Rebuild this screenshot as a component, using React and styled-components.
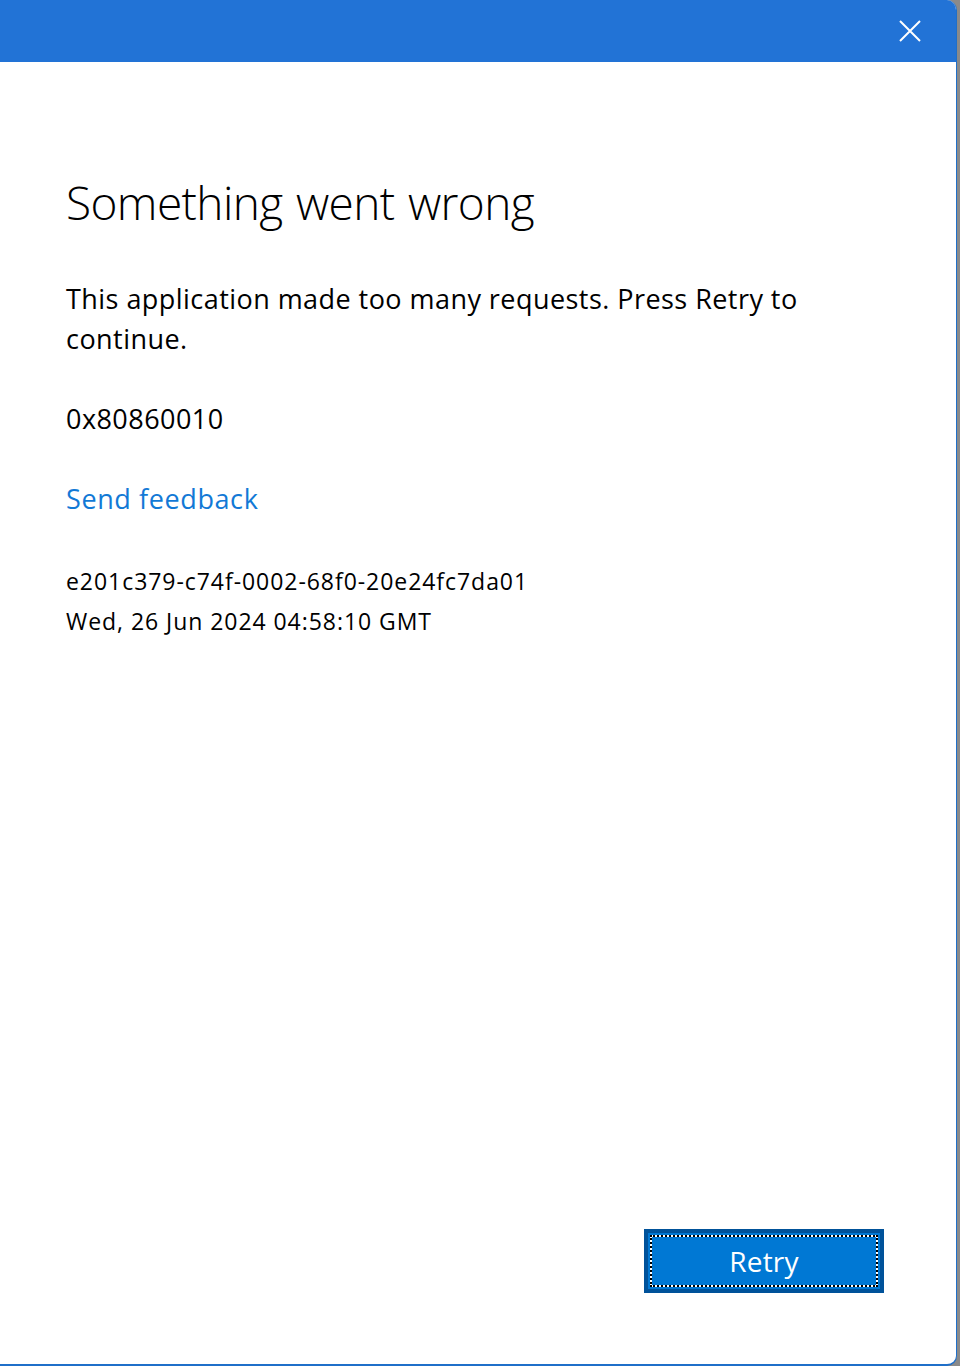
import styled, { createGlobalStyle } from 'styled-components';

const GlobalStyle = createGlobalStyle`
  html, body {
    margin: 0;
    padding: 0;
    background: #8a8a8a;
  }
  body {
    font-family: 'Open Sans', 'Noto Sans', sans-serif;
  }
`;

const Window = styled.div`
  width: 957px;
  height: 1366px;
  box-sizing: border-box;
  background: #ffffff;
  border-right: 1px solid #1f6fc9;
  border-bottom: 2px solid #1f6fc9;
  border-top-right-radius: 10px;
  border-bottom-right-radius: 10px;
  overflow: hidden;
  display: flex;
  flex-direction: column;
`;

const TitleBar = styled.div`
  height: 62px;
  background: #2273d6;
  display: flex;
  justify-content: flex-end;
  align-items: center;
  flex-shrink: 0;
`;

const CloseButton = styled.button`
  width: 62px;
  height: 62px;
  margin-right: 15px;
  border: none;
  background: transparent;
  display: flex;
  align-items: center;
  justify-content: center;
  cursor: pointer;
  padding: 0;
`;

const Content = styled.div`
  flex: 1;
  padding: 105px 0 0 66px;
  color: #000;
`;

const Title = styled.h1`
  margin: 0;
  font-weight: 300;
  font-size: 46px;
  line-height: 70px;
  letter-spacing: -0.6px;
  word-spacing: 2px;
`;

const Message = styled.p`
  margin: 42px 0 0;
  font-size: 27px;
  line-height: 40px;
  max-width: 770px;
  letter-spacing: 0.45px;
`;

const Code = styled.p`
  margin: 40px 0 0;
  font-size: 27px;
  line-height: 40px;
  letter-spacing: 0.45px;
`;

const FeedbackLink = styled.a`
  display: inline-block;
  margin-top: 40px;
  font-size: 27px;
  line-height: 40px;
  color: #1279d6;
  text-decoration: none;
  letter-spacing: 0.6px;
`;

const Details = styled.div`
  margin-top: 42px;
  font-size: 23px;
  line-height: 40px;
  letter-spacing: 0.95px;
`;

const Footer = styled.div`
  display: flex;
  justify-content: flex-end;
  padding: 0 72px 71px 0;
`;

const RetryButton = styled.button`
  width: 240px;
  height: 64px;
  box-sizing: border-box;
  background: #0078d4;
  border: 4px solid #00529a;
  padding: 2px;
  font-family: inherit;
  color: #fff;
  cursor: pointer;
`;

const FocusRing = styled.span`
  display: flex;
  align-items: center;
  justify-content: center;
  height: 100%;
  box-sizing: border-box;
  border: 2px dotted #000;
  background: linear-gradient(#0078d4, #0078d4) padding-box, #fff border-box;
  font-size: 28px;
  letter-spacing: 0.2px;
`;

export default function App() {
  return (
    <>
      <GlobalStyle />
      <Window>
        <TitleBar>
          <CloseButton aria-label="Close">
            <svg width="22" height="22" viewBox="0 0 22 22">
              <path d="M1 1 L21 21 M21 1 L1 21" stroke="#fff" strokeWidth="2" fill="none" />
            </svg>
          </CloseButton>
        </TitleBar>
        <Content>
          <Title>Something went wrong</Title>
          <Message>This application made too many requests. Press Retry to continue.</Message>
          <Code>0x80860010</Code>
          <FeedbackLink href="#">Send feedback</FeedbackLink>
          <Details>
            <div>e201c379-c74f-0002-68f0-20e24fc7da01</div>
            <div>Wed, 26 Jun 2024 04:58:10 GMT</div>
          </Details>
        </Content>
        <Footer>
          <RetryButton>
            <FocusRing>Retry</FocusRing>
          </RetryButton>
        </Footer>
      </Window>
    </>
  );
}
